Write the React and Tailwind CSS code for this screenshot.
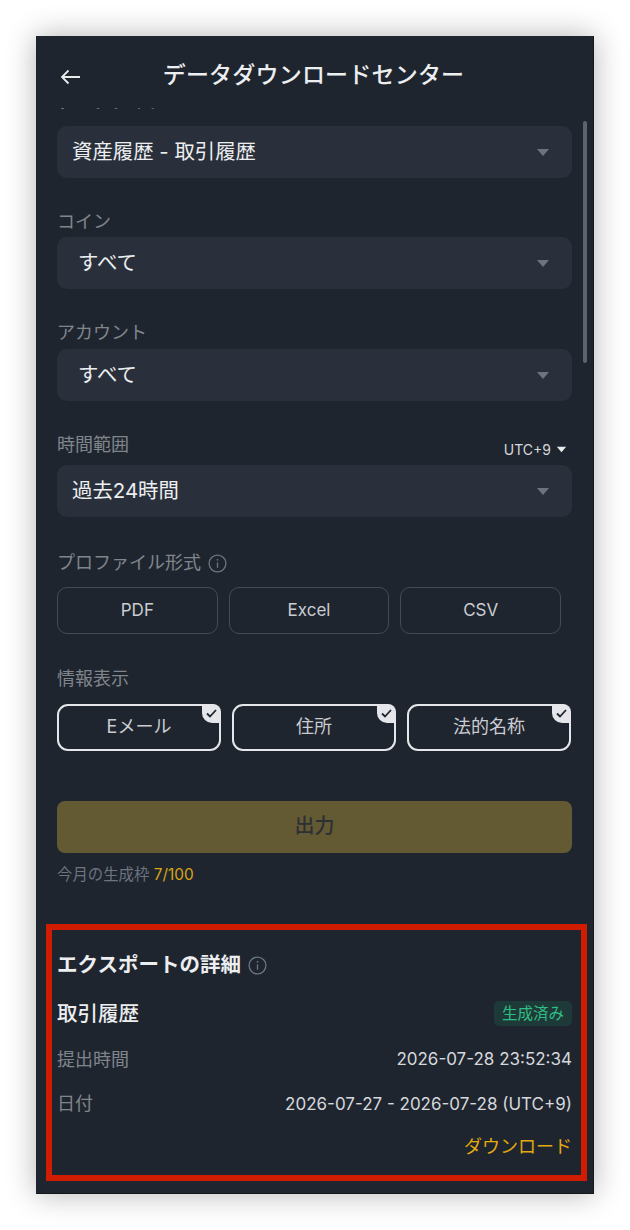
const font = { fontFamily: '"Inter", "Noto Sans CJK JP", sans-serif' };

const Caret = ({ className = "" }) => (
  <svg width="14" height="9" viewBox="0 0 14 9" className={className}>
    <path d="M1 1h12L7 8z" fill="currentColor" />
  </svg>
);

const Info = () => (
  <svg width="19" height="19" viewBox="0 0 19 19" fill="none" className="text-[#6d7580]">
    <circle cx="9.5" cy="9.5" r="8.4" stroke="currentColor" strokeWidth="1.3" />
    <circle cx="9.5" cy="5.8" r="0.9" fill="currentColor" />
    <path d="M9.5 8.4v5.4" stroke="currentColor" strokeWidth="1.3" />
  </svg>
);

const Select = ({ value, indent }) => (
  <div className="flex h-[52px] items-center justify-between rounded-[10px] bg-[#2a303b] pr-[22px]">
    <span className={`text-[20.4px] text-[#eceef0] ${indent ? "pl-[21px]" : "pl-[15px]"}`}>
      {value}
    </span>
    <Caret className="text-[#6b7480]" />
  </div>
);

const Label = ({ children }) => (
  <p className="h-6 text-[18px] leading-6 text-[#80858c]">{children}</p>
);

const CheckCard = ({ label }) => (
  <div className="relative flex h-[47px] w-[164px] items-center justify-center rounded-[11px] border-2 border-[#e4e6e9] pb-[3px] text-[18px] text-[#c9ccd1]">
    {label}
    <span className="absolute -right-[2px] -top-[2px] flex h-[19px] w-[19px] items-center justify-center rounded-bl-[10px] rounded-tr-[8px] bg-[#e4e6e9]">
      <svg width="11" height="9" viewBox="0 0 11 9" fill="none">
        <path d="M1 4.5l3 3 6-6.5" stroke="#1f252f" strokeWidth="1.8" />
      </svg>
    </span>
  </div>
);

const App = () => {
  return (
    <div className="h-[1230px] w-[630px] bg-white pl-9 pt-9" style={font}>
      <div className="relative flex h-[1158px] w-[558px] flex-col border-b border-r border-[#14171c] bg-[#1f252f] shadow-[0_0_28px_rgba(0,0,0,0.3)]">
        <div className="relative flex h-[72px] shrink-0 items-center justify-center pr-[2px] pt-[6px]">
          <svg width="20" height="16" viewBox="0 0 20 16" fill="none" className="absolute left-[24px] top-[33px] text-[#e8eaec]">
            <path d="M20 8H2M8.5 1.5L2 8l6.5 6.5" stroke="currentColor" strokeWidth="1.8" />
          </svg>
          <h1 className="text-[23px] font-medium tracking-[0.2px] text-[#eceef0]">データダウンロードセンター</h1>
        </div>

        <div className="relative flex-1 overflow-hidden pl-[21px] pr-[21px]">
          <div className="absolute right-[6px] top-[13px] h-[242px] w-1 rounded-full bg-[#5d636c]" />

          <div className="-mt-[18px] mb-3">
            <Label>データタイプ</Label>
          </div>
          <Select value="資産履歴 - 取引履歴" />

          <div className="mb-[3px] mt-[32px]">
            <Label>コイン</Label>
          </div>
          <Select value="すべて" indent />

          <div className="mb-[4px] mt-[32px]">
            <Label>アカウント</Label>
          </div>
          <Select value="すべて" indent />

          <div className="mb-2 mt-[32px] flex h-6 items-start justify-between pr-[5px]">
            <Label>時間範囲</Label>
            <span className="mt-[6px] flex items-center gap-[5px] text-[14px] text-[#d5d8dc]">
              UTC+9 <Caret className="h-[7px] w-[11px] text-[#e8eaec]" />
            </span>
          </div>
          <Select value="過去24時間" />

          <div className="mb-[12px] mt-[34px] flex h-6 items-center gap-[7px]">
            <Label>プロファイル形式</Label>
            <Info />
          </div>
          <div className="flex w-[504px] gap-[11px]">
            {["PDF", "Excel", "CSV"].map((item) => (
              <div key={item} className="flex h-[47px] w-[161px] items-center justify-center rounded-[10px] border border-[#444b55] text-[17px] text-[#c9ccd1]">
                {item}
              </div>
            ))}
          </div>

          <div className="mb-[13px] mt-[33px]">
            <Label>情報表示</Label>
          </div>
          <div className="flex gap-[11px]">
            <CheckCard label="Eメール" />
            <CheckCard label="住所" />
            <CheckCard label="法的名称" />
          </div>

          <div className="mt-[50px] flex h-[52px] items-center justify-center rounded-[8px] bg-[#635a33] pb-[2px] text-[20px] font-medium text-[#2c2f33]">
            出力
          </div>
          <p className="mt-3 h-5 text-[15.4px] leading-5 text-[#6b7480]">
            今月の生成枠 <span className="text-[#d9a514]">7/100</span>
          </p>

          <div className="mt-[66px] flex h-7 items-center gap-[7px]">
            <h2 className="text-[20.5px] font-semibold text-[#eceef0]">エクスポートの詳細</h2>
            <Info />
          </div>
          <div className="mt-[22px] flex h-[25px] items-center justify-between">
            <span className="pt-[2px] text-[20.5px] font-medium text-[#eceef0]">取引履歴</span>
            <span className="flex h-[25px] w-[78px] items-center justify-center rounded-[5px] bg-[#1e3a38] text-[15.5px] text-[#2fbd85]">
              生成済み
            </span>
          </div>
          <div className="mt-[21px] flex h-6 items-center justify-between">
            <span className="text-[18px] text-[#80858c]">提出時間</span>
            <span className="pt-[2px] text-[17px] text-[#d5d8dc]">2026-07-28 23:52:34</span>
          </div>
          <div className="mt-5 flex h-6 items-center justify-between">
            <span className="text-[18px] text-[#80858c]">日付</span>
            <span className="pt-[3px] text-[17px] text-[#d5d8dc]">2026-07-27 - 2026-07-28 (UTC+9)</span>
          </div>
          <p className="mt-5 h-6 text-right text-[18px] leading-6 text-[#e3a90f]">ダウンロード</p>
        </div>

        <div className="absolute left-[10px] top-[888px] h-[257px] w-[541px] border-[6px] border-[#d01c00]" />
      </div>
    </div>
  );
};

export default App;
